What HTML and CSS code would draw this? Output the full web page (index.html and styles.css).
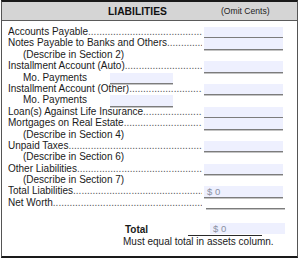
FILE: index.html
```html
<!DOCTYPE html>
<html>
<head>
<meta charset="utf-8">
<link rel="stylesheet" href="styles.css">
</head>
<body>
<div class="panel">
  <div class="head">
    <span class="title">LIABILITIES</span>
    <span class="omit">(Omit Cents)</span>
  </div>
  <div class="rows">
    <div class="row"><span class="lead">Accounts Payable</span><span class="field"></span></div>
    <div class="row"><span class="lead">Notes Payable to Banks and Others</span><span class="field"></span></div>
    <div class="row"><span class="sub">(Describe in Section 2)</span></div>
    <div class="row"><span class="lead">Installment Account (Auto)</span><span class="field"></span></div>
    <div class="row"><span class="sub mo">Mo. Payments</span><span class="field small"></span></div>
    <div class="row"><span class="lead">Installment Account (Other)</span><span class="field"></span></div>
    <div class="row"><span class="sub mo">Mo. Payments</span><span class="field small"></span></div>
    <div class="row"><span class="lead">Loan(s) Against Life Insurance</span><span class="field"></span></div>
    <div class="row"><span class="lead">Mortgages on Real Estate</span><span class="field"></span></div>
    <div class="row"><span class="sub">(Describe in Section 4)</span></div>
    <div class="row"><span class="lead">Unpaid Taxes</span><span class="field"></span></div>
    <div class="row"><span class="sub">(Describe in Section 6)</span></div>
    <div class="row"><span class="lead">Other Liabilities</span><span class="field"></span></div>
    <div class="row"><span class="sub">(Describe in Section 7)</span></div>
    <div class="row"><span class="lead">Total Liabilities</span><span class="field"><span class="amt">$ 0</span></span></div>
    <div class="row"><span class="lead">Net Worth</span><span class="field plain"></span></div>
  </div>
  <div class="totals">
    <div class="total-row">
      <span class="total-label">Total</span>
      <div class="total-line"><div class="total-box"><span class="amt">$ 0</span></div></div>
    </div>
    <div class="note">Must equal total in assets column.</div>
  </div>
</div>
</body>
</html>
```

FILE: styles.css
```css
html, body {
  margin: 0;
  padding: 0;
  background: #ffffff;
}
body {
  font-family: "Liberation Sans", Arial, sans-serif;
  font-size: 10px;
  color: #1a1a1a;
}
.panel {
  margin-left: 1px;
  width: 297px;
  height: 258px;
  box-sizing: border-box;
  border-top: 2px solid #1a1a1a;
  border-bottom: 2px solid #1a1a1a;
  border-left: 1px solid #555555;
  border-right: 1.5px solid #555555;
}
.head {
  height: 18px;
  background: #d5d5d5;
  border-bottom: 1px solid #5a5a5a;
  display: flex;
  align-items: center;
}
.title {
  margin-left: 106px;
  font-weight: bold;
  font-size: 10.3px;
  color: #111111;
}
.omit {
  margin-left: 54px;
  font-size: 8.6px;
  color: #222222;
}
.rows {
  padding: 5px 0 0 6px;
}
.row {
  display: flex;
  height: 11.4px;
  line-height: 11.4px;
  white-space: nowrap;
}
.lead {
  width: 194px;
  overflow: hidden;
  white-space: nowrap;
}
.lead::after {
  content: "..............................................................................................";
  color: #555555;
}
.sub {
  padding-left: 15px;
}
.mo {
  width: 87px;
}
.field {
  margin-left: 2px;
  width: 79px;
  height: 100%;
  box-sizing: border-box;
  background: #eef0fe;
  border-bottom: 1px solid #7c7c7c;
  box-shadow: 0 1px 0 #c4c4c4;
  transform: translateY(1px);
}
.field.small {
  margin-left: 0;
  width: 63px;
}
.field.plain {
  background: transparent;
  margin-left: 4px;
}
.amt {
  padding-left: 3px;
  font-size: 9.5px;
  color: #8a90a3;
}
.totals {
  margin-top: 15.6px;
  padding-left: 121px;
}
.total-row {
  display: flex;
  align-items: flex-end;
  height: 11.4px;
}
.total-label {
  margin-left: 2px;
  width: 63px;
  font-weight: bold;
  line-height: 11.4px;
}
.total-line {
  width: 74px;
  height: 12px;
  border-bottom: 1.5px solid #2a2a2a;
  margin-bottom: -0.5px;
}
.total-box {
  margin-left: 22px;
  width: 75px;
  height: 11px;
  line-height: 11px;
  background: #eef0fe;
}
.note {
  line-height: 11.4px;
  margin-top: 0.6px;
}
```
